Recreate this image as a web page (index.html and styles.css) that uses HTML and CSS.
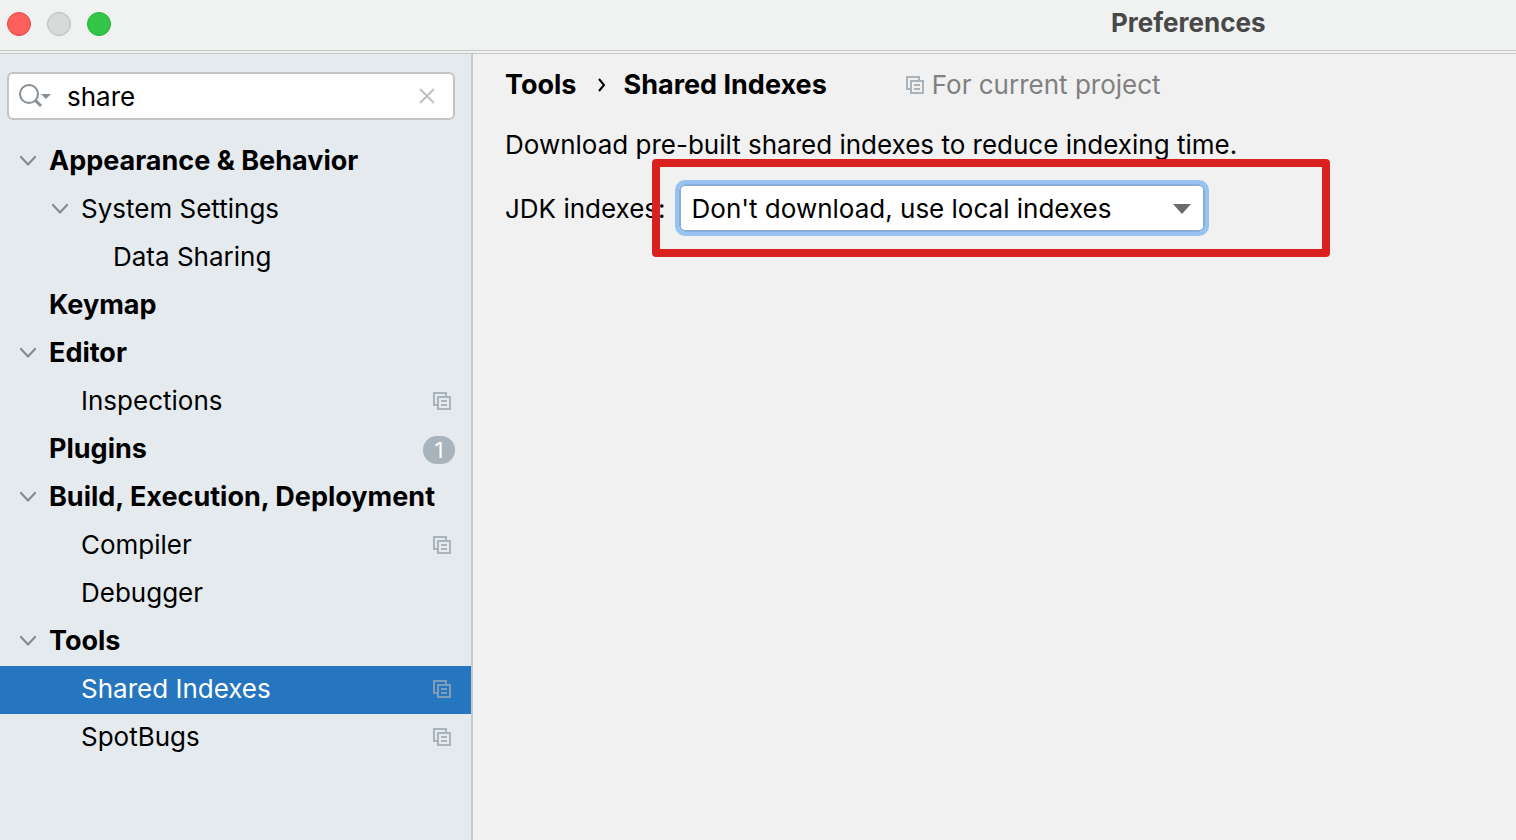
FILE: index.html
```html
<!DOCTYPE html>
<html lang="en">
<head>
<meta charset="utf-8">
<title>Preferences</title>
<link rel="stylesheet" href="styles.css">
</head>
<body>
<svg class="defs" aria-hidden="true">
  <symbol id="project" viewBox="0 0 18 18"><path d="M4 13H1V1H13V4M5 5H17V17H5ZM8 9H14M8 13H14" fill="none" stroke="currentColor" stroke-width="2"/></symbol>
  <symbol id="chevron" viewBox="0 0 20 12"><path d="M3 2L10 9.500L17 2" fill="none" stroke="currentColor" stroke-width="2.200" stroke-linecap="round"/></symbol>
</svg>
<header class="titlebar">
  <div class="lights">
    <button class="light close" aria-label="Close"></button>
    <button class="light minimize" aria-label="Minimize" disabled></button>
    <button class="light expand" aria-label="Zoom"></button>
  </div>
  <h1 class="title">Preferences</h1>
</header>
<div class="window">
  <aside class="sidebar">
    <div class="search">
      <svg class="search-icon" viewBox="0 0 34 26" aria-hidden="true"><circle cx="11" cy="11" r="9" fill="none" stroke="#868e95" stroke-width="2"/><path d="M17 17L23 23" stroke="#868e95" stroke-width="3"/><path d="M23 11H33L28 16Z" fill="#868e95"/></svg>
      <input class="search-input" type="text" value="share" aria-label="Search settings">
      <button class="clear" aria-label="Clear search"><svg viewBox="0 0 16 16"><path d="M1 1L15 15M15 1L1 15" fill="none" stroke="#bcc1c6" stroke-width="2"/></svg></button>
    </div>
    <nav aria-label="Settings">
      <ul class="tree">
        <li class="row group"><button class="toggle" aria-label="Collapse Appearance &amp; Behavior"><svg><use href="#chevron"/></svg></button><a href="#" class="label">Appearance &amp; Behavior</a></li>
        <li class="row level-2"><button class="toggle" aria-label="Collapse System Settings"><svg><use href="#chevron"/></svg></button><a href="#" class="label">System Settings</a></li>
        <li class="row level-3"><a href="#" class="label">Data Sharing</a></li>
        <li class="row group leaf"><a href="#" class="label">Keymap</a></li>
        <li class="row group"><button class="toggle" aria-label="Collapse Editor"><svg><use href="#chevron"/></svg></button><a href="#" class="label">Editor</a></li>
        <li class="row level-2 leaf"><a href="#" class="label">Inspections</a><svg class="project"><use href="#project"/></svg></li>
        <li class="row group leaf"><a href="#" class="label">Plugins</a><span class="count">1</span></li>
        <li class="row group"><button class="toggle" aria-label="Collapse Build, Execution, Deployment"><svg><use href="#chevron"/></svg></button><a href="#" class="label">Build, Execution, Deployment</a></li>
        <li class="row level-2 leaf"><a href="#" class="label">Compiler</a><svg class="project"><use href="#project"/></svg></li>
        <li class="row level-2 leaf"><a href="#" class="label">Debugger</a></li>
        <li class="row group"><button class="toggle" aria-label="Collapse Tools"><svg><use href="#chevron"/></svg></button><a href="#" class="label">Tools</a></li>
        <li class="row level-2 leaf selected"><a href="#" class="label" aria-current="page">Shared Indexes</a><svg class="project"><use href="#project"/></svg></li>
        <li class="row level-2 leaf"><a href="#" class="label">SpotBugs</a><svg class="project"><use href="#project"/></svg></li>
      </ul>
    </nav>
  </aside>
  <main class="content">
    <div class="crumbs">
      <a href="#" class="crumb">Tools</a>
      <svg class="crumb-arrow" viewBox="0 0 8 14" aria-hidden="true"><path d="M1 1L6 7L1 13" fill="none" stroke="#000" stroke-width="2"/></svg>
      <h2 class="crumb">Shared Indexes</h2>
      <span class="scope"><svg class="project"><use href="#project"/></svg>For current project</span>
    </div>
    <p class="intro">Download pre-built shared indexes to reduce indexing time.</p>
    <div class="field">
      <label for="jdk">JDK indexes:</label>
      <div class="select-box">
        <select id="jdk" class="select"><option>Don't download, use local indexes</option></select>
        <svg class="select-arrow" viewBox="0 0 18 10" aria-hidden="true"><path d="M0 0H18L9 10Z" fill="#6b6b6b"/></svg>
        <div class="highlight"></div>
      </div>
    </div>
  </main>
</div>
</body>
</html>
```

FILE: styles.css
```css
* { box-sizing: border-box; }

body {
  margin: 0;
  min-height: 100vh;
  display: flex;
  flex-direction: column;
  font: 26px/32px Inter, "Liberation Sans", sans-serif;
  color: #000;
  background: #f1f1f1;
}

button { padding: 0; border: 0; background: none; }
a { color: inherit; text-decoration: none; }
.defs { display: none; }

.titlebar {
  display: flex;
  align-items: center;
  padding: 0 0 4px 7px;
  height: 51px;
  background: #f0f2f1;
  border-bottom: 1px solid #c4c9c8;
}
.lights { display: flex; gap: 16px; padding-top: 2px; }
.light { width: 24px; height: 24px; border-radius: 50%; border: 1px solid; }
.close { background: #fc605c; border-color: #e2463f; }
.minimize { background: #d8dad9; border-color: #b9bbba; }
.expand { background: #34c648; border-color: #24ad35; }
.title { margin: 0 0 0 1000px; font-size: 26px; font-weight: 700; color: #484848; }

.window {
  flex: 1;
  display: flex;
  border-top: 1px solid #c4c9c8;
  margin-top: 2px;
}
.sidebar {
  flex: 0 0 473px;
  min-width: 0;
  padding-top: 18px;
  background: #e5eaee;
  border-right: 2px solid #c8cacc;
}
.search {
  display: flex;
  align-items: center;
  height: 48px;
  margin: 0 16px 18px 7px;
  padding: 0 18px 0 9px;
  background: #fff;
  border: 2px solid #c2c3c4;
  border-radius: 6px;
}
.search-icon { width: 34px; height: 26px; flex: none; }
.search-input {
  flex: 1;
  min-width: 0;
  margin-left: 15px;
  padding: 2px 0 0;
  border: 0;
  outline: 0;
  font: inherit;
  background: none;
}
.clear { width: 16px; height: 16px; }
.clear svg { display: block; }

.tree { list-style: none; margin: 0; padding: 0; }
.row {
  display: flex;
  align-items: center;
  height: 48px;
  padding: 0 20px 2px 18px;
}
.group { font-size: 27px; font-weight: 700; padding-right: 16px; }
.group.leaf { padding-left: 49px; }
.level-2 { padding-left: 50px; }
.level-2.leaf { padding-left: 81px; }
.level-3 { padding-left: 113px; }
.label { flex: 1; white-space: nowrap; }
.toggle { width: 20px; height: 12px; margin-right: 11px; color: #858a8e; }
.toggle svg { display: block; width: 20px; height: 12px; }
.project { flex: none; width: 18px; height: 18px; color: #a9b3bb; }
.selected { background: #2675bf; color: #fff; }
.selected .project { color: #7f9fb9; }
.count {
  width: 32px;
  height: 28px;
  margin-top: 2px;
  border-radius: 14px;
  background: #a9b3bb;
  color: #fff;
  font-size: 22px;
  font-weight: 400;
  line-height: 28px;
  text-align: center;
}

.content { flex: 1; min-width: 0; padding: 15px 32px; }
.crumbs { display: flex; align-items: center; margin-bottom: 28px; }
.crumb { margin: 0; font-size: 27px; font-weight: 700; }
.crumb-arrow { width: 8px; height: 14px; margin: 0 17px 0 22px; }
.scope { display: flex; align-items: center; gap: 8px; margin-left: 79px; color: #808080; }
.intro { margin: 0 0 23px; }
.field { display: flex; align-items: center; gap: 13px; }
.select-box { position: relative; width: 526px; }
.select {
  display: block;
  width: 100%;
  height: 48px;
  padding: 2px 48px 0 11px;
  appearance: none;
  font: inherit;
  color: #000;
  background: #fff;
  border: 2px solid #85aedb;
  border-radius: 6px;
  outline: 4px solid #98c3f1;
}
.field label { padding-top: 2px; }
.select-arrow { position: absolute; right: 14px; top: 20px; width: 18px; height: 10px; pointer-events: none; }
.highlight {
  position: absolute;
  inset: -25px -125px -25px -27px;
  border: 8px solid #d9221f;
  border-radius: 4px;
  pointer-events: none;
}
```
